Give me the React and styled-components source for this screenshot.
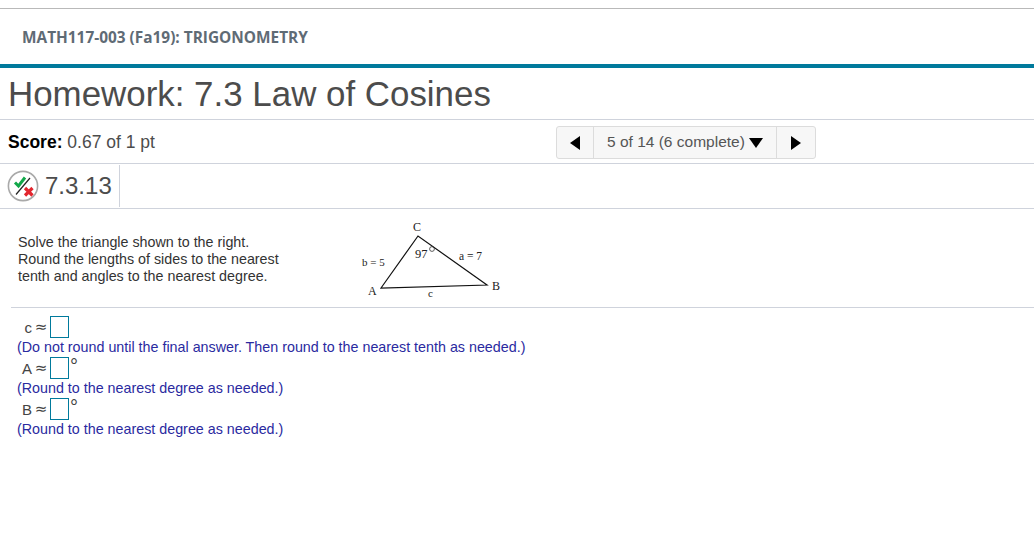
import React from 'react'
import styled, { createGlobalStyle } from 'styled-components'

const GlobalStyle = createGlobalStyle`
  html, body {
    margin: 0;
    padding: 0;
    background: #fff;
    font-family: "Liberation Sans", Arial, sans-serif;
  }
`

function ResultIcon() {
  return (
    <svg width="32" height="32" viewBox="0 0 32 32">
      <circle cx="16" cy="16" r="14.6" fill="#fff" stroke="#a9a9a9" strokeWidth="1.6" />
      <path d="M9 24.5 L23 8" stroke="#222" strokeWidth="1.2" fill="none" />
      <path d="M8 12.5 L11.5 16 L18 7.5" stroke="#12a84a" strokeWidth="3" fill="none" />
      <path d="M18 18 L25.5 25.5 M25.5 18 L18 25.5" stroke="#e2262e" strokeWidth="3.2" fill="none" />
    </svg>
  )
}

function Triangle() {
  return (
    <svg width="170" height="90" viewBox="0 0 170 90">
      <path d="M70 23 L33 75 L139 72 Z" fill="none" stroke="#111" strokeWidth="1.2" />
      <Label x="65" y="18" size="12">C</Label>
      <Label x="20" y="82" size="12">A</Label>
      <Label x="144" y="77" size="12">B</Label>
      <Label x="14" y="53" size="11">b = 5</Label>
      <Label x="111" y="47" size="11.5">a = 7</Label>
      <Label x="80" y="84" size="11">c</Label>
      <Label x="67" y="45" size="12.5">97</Label>
      <circle cx="84" cy="36" r="2.4" fill="none" stroke="#333" strokeWidth="0.8" />
    </svg>
  )
}

function AnswerLine({ label, degree, hint }) {
  return (
    <>
      <AnswerRow>
        <AnswerLabel>{label}</AnswerLabel>
        <Approx>≈</Approx>
        <AnswerBox />
        {degree && <Degree>°</Degree>}
      </AnswerRow>
      <Hint>{hint}</Hint>
    </>
  )
}

export default function App() {
  return (
    <Page>
      <GlobalStyle />
      <CourseBar>MATH117-003 (Fa19): TRIGONOMETRY</CourseBar>
      <TitleBar>Homework: 7.3 Law of Cosines</TitleBar>
      <ScoreBar>
        <Score><b>Score:</b> 0.67 of 1 pt</Score>
        <Pager>
          <PagerArrow $width="36px">
            <ArrowLeft />
          </PagerArrow>
          <PagerLabel>
            5 of 14 (6 complete)
            <ArrowDown />
          </PagerLabel>
          <PagerArrow $width="38px">
            <ArrowRight />
          </PagerArrow>
        </Pager>
      </ScoreBar>
      <QuestionBar>
        <QuestionTab>
          <ResultIcon />
          <QuestionNumber>7.3.13</QuestionNumber>
        </QuestionTab>
      </QuestionBar>
      <Problem>
        <ProblemText>
          Solve the triangle shown to the right.<br />
          Round the lengths of sides to the nearest<br />
          tenth and angles to the nearest degree.
        </ProblemText>
        <Figure>
          <Triangle />
        </Figure>
      </Problem>
      <Answers>
        <AnswerLine label="c" hint="(Do not round until the final answer. Then round to the nearest tenth as needed.)" />
        <AnswerLine label="A" degree hint="(Round to the nearest degree as needed.)" />
        <AnswerLine label="B" degree hint="(Round to the nearest degree as needed.)" />
      </Answers>
    </Page>
  )
}

const Page = styled.div`
  width: 1034px;
  height: 543px;
  padding-top: 8px;
  box-sizing: border-box;
  overflow: hidden;
  background: #fff;
`

const CourseBar = styled.div`
  height: 53px;
  padding-top: 2px;
  border-top: 1px solid #b9b9b9;
  padding-left: 22px;
  display: flex;
  align-items: center;
  font-family: "Open Sans", sans-serif;
  font-size: 15.4px;
  font-weight: 700;
  color: #5f6b75;
`

const TitleBar = styled.h1`
  margin: 0;
  height: 51px;
  border-top: 4px solid #007a9c;
  border-bottom: 1px solid #cfd3dc;
  padding-left: 8px;
  display: flex;
  align-items: center;
  font-size: 34.9px;
  font-weight: 400;
  color: #4c4c4c;
`

const ScoreBar = styled.div`
  height: 43px;
  border-bottom: 1px solid #cfd3dc;
  padding-left: 8px;
  padding-right: 218px;
  display: flex;
  align-items: center;
  justify-content: space-between;
`

const Score = styled.div`
  margin-top: 2px;
  font-size: 17.5px;
  color: #4c4c4c;

  b {
    color: #000;
  }
`

const Pager = styled.div`
  width: 260px;
  height: 33px;
  box-sizing: border-box;
  border: 1px solid #dcdcdc;
  border-radius: 3px;
  background: #f7f7f7;
  display: flex;
  margin-top: 2px;
`

const PagerArrow = styled.div`
  width: ${(p) => p.$width};
  display: flex;
  align-items: center;
  justify-content: center;
`

const PagerLabel = styled.div`
  flex: 1;
  border-left: 1px solid #dcdcdc;
  border-right: 1px solid #dcdcdc;
  padding-left: 13px;
  padding-bottom: 2px;
  display: flex;
  align-items: center;
  gap: 4px;
  font-size: 15.5px;
  color: #555;
`

const ArrowLeft = styled.span`
  border-top: 7px solid transparent;
  border-bottom: 7px solid transparent;
  border-right: 10px solid #000;
`

const ArrowRight = styled.span`
  border-top: 7px solid transparent;
  border-bottom: 7px solid transparent;
  border-left: 10px solid #000;
`

const ArrowDown = styled.span`
  margin-top: 2px;
  border-left: 7.5px solid transparent;
  border-right: 7.5px solid transparent;
  border-top: 10px solid #000;
`

const QuestionBar = styled.div`
  height: 44px;
  border-bottom: 1px solid #cfd3dc;
  display: flex;
`

const QuestionTab = styled.div`
  height: 42px;
  margin-top: 1px;
  padding-left: 7px;
  padding-right: 7px;
  border-right: 1px solid #cfd3dc;
  display: flex;
  align-items: center;
  gap: 6px;
`

const QuestionNumber = styled.span`
  font-size: 24px;
  color: #4c4c4c;
`

const Problem = styled.div`
  height: 98px;
  margin-left: 11px;
  border-bottom: 1px solid #cfd3dc;
  display: flex;
  position: relative;
`

const ProblemText = styled.div`
  width: 330px;
  padding-top: 25px;
  padding-left: 7px;
  font-size: 14.3px;
  line-height: 17px;
  color: #333;
`

const Figure = styled.div`
  padding-top: 4px;
`

const Label = styled.text`
  font-family: "Liberation Serif", serif;
  font-size: ${(p) => p.size}px;
  fill: #222;
`

const Answers = styled.div`
  padding-left: 17px;
  padding-top: 7px;
`

const AnswerRow = styled.div`
  height: 24px;
  display: flex;
  align-items: center;
  font-size: 15px;
  color: #444;
`

const AnswerLabel = styled.span`
  width: 15px;
  text-align: right;
`

const Approx = styled.span`
  width: 18px;
  text-align: center;
  font-family: "DejaVu Sans", sans-serif;
  font-size: 15px;
`

const AnswerBox = styled.span`
  width: 19px;
  height: 22px;
  box-sizing: border-box;
  border: 1px solid #007a9c;
  background: #fff;
`

const Degree = styled.span`
  align-self: flex-start;
  margin-left: 1px;
  font-size: 20px;
  line-height: 20px;
`

const Hint = styled.div`
  height: 17px;
  line-height: 17px;
  font-size: 14.3px;
  color: #2a2aa0;
`
